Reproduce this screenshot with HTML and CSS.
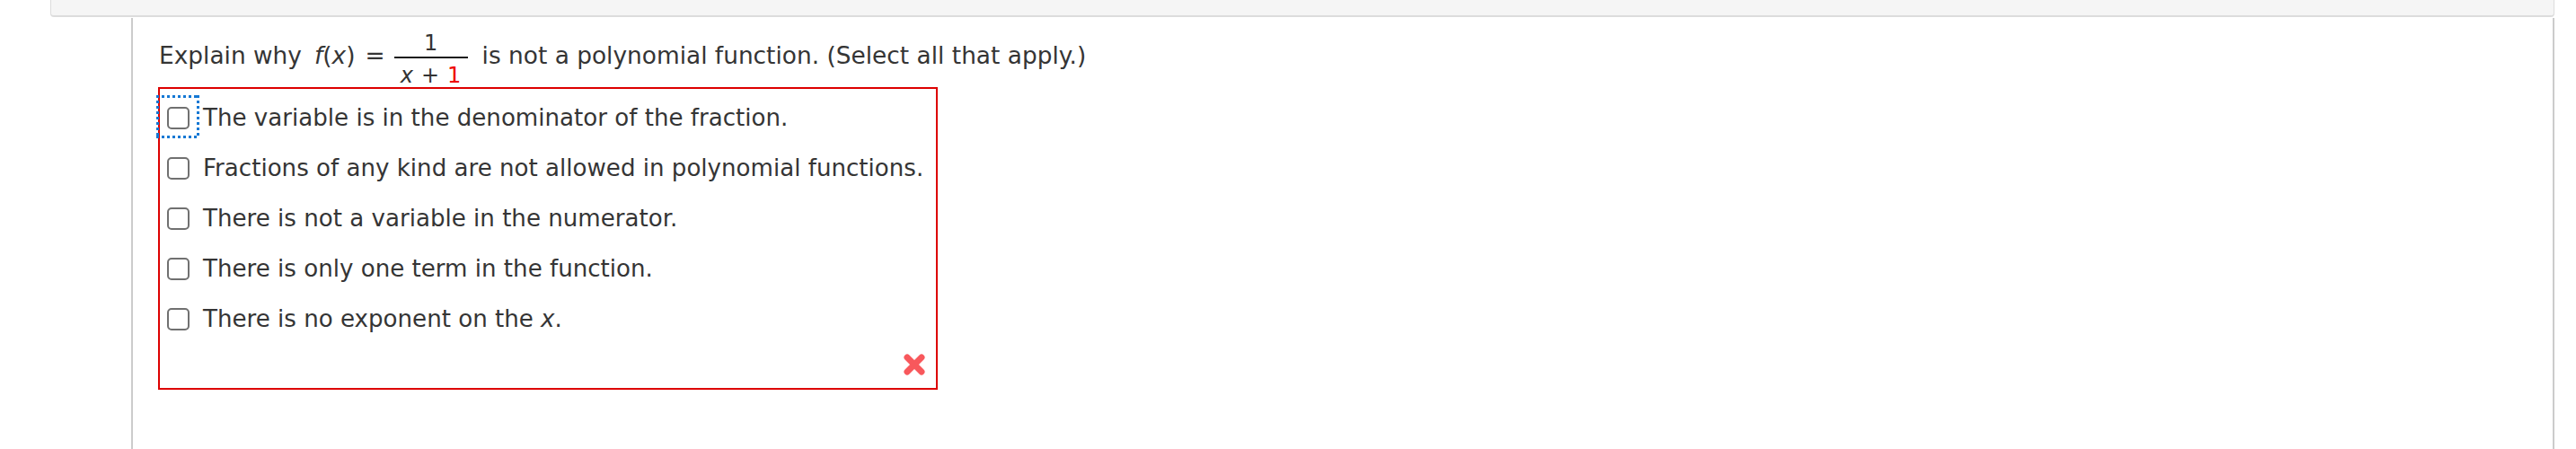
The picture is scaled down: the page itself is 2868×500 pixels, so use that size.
FILE: index.html
```html
<!DOCTYPE html>
<html lang="en">
<head>
<meta charset="utf-8">
<title>Polynomial question</title>
<link rel="stylesheet" href="styles.css">
</head>
<body>
<div class="topbar"></div>
<div class="panel">
  <p class="question">Explain why<span class="math"><i>f</i>(<i>x</i>)<span class="eq">=</span><span class="frac"><span class="num">1</span><span class="bar"></span><span class="den"><i>x</i><span class="plus">+</span><span class="red">1</span></span></span></span><span class="rest">is not a polynomial function. (Select all that apply.)</span></p>
  <div class="answers">
    <label class="row"><span class="box focus"></span><span class="txt">The variable is in the denominator of the fraction.</span></label>
    <label class="row"><span class="box"></span><span class="txt">Fractions of any kind are not allowed in polynomial functions.</span></label>
    <label class="row"><span class="box"></span><span class="txt">There is not a variable in the numerator.</span></label>
    <label class="row"><span class="box"></span><span class="txt">There is only one term in the function.</span></label>
    <label class="row"><span class="box"></span><span class="txt">There is no exponent on the <i>x</i>.</span></label>
    <svg class="wrong" width="26" height="26" viewBox="0 0 26 26" aria-hidden="true">
      <path d="M5 5 L21 21 M21 5 L5 21" stroke="#f8585c" stroke-width="7" stroke-linecap="round" fill="none"/>
    </svg>
  </div>
</div>
</body>
</html>
```

FILE: styles.css
```css
html, body {
  margin: 0;
  padding: 0;
}
body {
  height: 100vh;
  overflow: hidden;
  display: flex;
  flex-direction: column;
  font-family: "DejaVu Sans", Verdana, sans-serif;
  color: #353535;
  background: #fff;
}
.topbar {
  flex: none;
  box-sizing: border-box;
  margin-left: 56px;
  width: 2788px;
  height: 19px;
  background: #f5f5f5;
  border: 1px solid #dcdcdc;
  border-top: 0;
  border-bottom-width: 2px;
  border-radius: 0 0 4px 4px;
}
.panel {
  flex: 1;
  box-sizing: border-box;
  margin-left: 146px;
  margin-top: 1px;
  width: 2698px;
  border-left: 2px solid #cccccc;
  border-right: 2px solid #cccccc;
  padding-left: 28px;
}
.question {
  margin: 0;
  padding: 17px 0 0 1px;
  font-size: 26.4px;
  white-space: nowrap;
}
.math {
  margin-left: 14px;
}
.math i {
  font-style: italic;
}
.eq {
  margin: 0 10px 0 11px;
}
.frac {
  display: inline-flex;
  flex-direction: column;
  align-items: center;
  vertical-align: 15px;
  width: 82px;
  font-size: 24px;
  line-height: 22px;
}
.num {
  padding-bottom: 4px;
  color: #333;
}
.bar {
  align-self: stretch;
  height: 2px;
  background: #1a1a1a;
}
.den {
  padding-top: 8px;
  color: #333;
}
.plus {
  margin: 0 9px;
}
.red {
  color: #ee0000;
}
.rest {
  margin-left: 16px;
}
.answers {
  box-sizing: border-box;
  margin-top: 2px;
  width: 868px;
  height: 337px;
  border: 2px solid #dd0000;
  padding: 4px 0 0 8px;
  display: flex;
  flex-direction: column;
}
.row {
  display: flex;
  align-items: center;
  gap: 15px;
  height: 56px;
  font-size: 26.1px;
  white-space: nowrap;
}
.box {
  flex: none;
  position: relative;
  box-sizing: border-box;
  width: 25px;
  height: 25px;
  border: 2px solid #707070;
  border-radius: 5px;
  background: #fff;
}
.box.focus::after {
  content: "";
  position: absolute;
  left: -14px;
  top: -15px;
  width: 48px;
  height: 48px;
  background:
    repeating-linear-gradient(90deg, #1478d4 0 3px, transparent 3px 6px) top left / 100% 3px no-repeat,
    repeating-linear-gradient(90deg, #1478d4 0 3px, transparent 3px 6px) bottom left / 100% 3px no-repeat,
    repeating-linear-gradient(180deg, #1478d4 0 3px, transparent 3px 6px) top left / 3px 100% no-repeat,
    repeating-linear-gradient(180deg, #1478d4 0 3px, transparent 3px 6px) top right / 3px 100% no-repeat;
}
.wrong {
  margin-top: auto;
  align-self: flex-end;
  margin-right: 11px;
  margin-bottom: 13px;
}
```
